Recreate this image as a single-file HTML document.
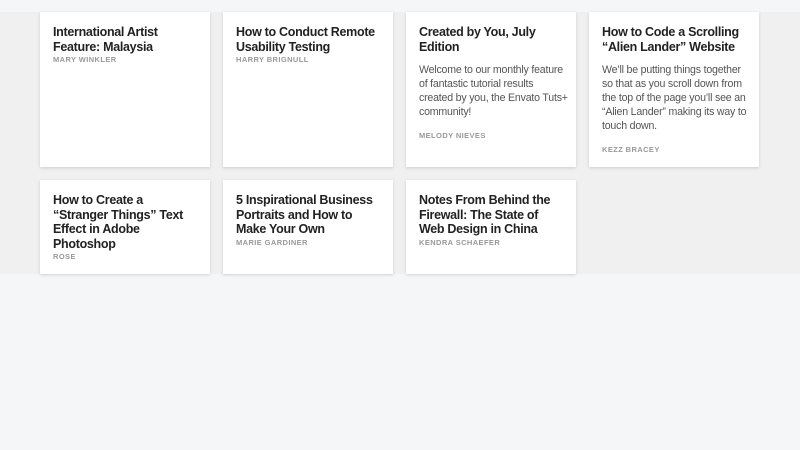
<!DOCTYPE html><html><head><style>
html,body{margin:0;width:800px;height:450px;background:#f5f6f8;font-family:"Liberation Sans",Arial,sans-serif;overflow:hidden}
.band{position:absolute;top:12px;left:0;width:800px;height:262px;background:#f0f0f0}
.c{position:absolute;width:170px;background:#fff;box-shadow:0 1px 3px rgba(0,0,0,.15);box-sizing:border-box;padding:13px 5px 0 13px;white-space:nowrap;overflow:hidden}
.t{font-weight:bold;font-size:12.5px;line-height:14.5px;color:#222;letter-spacing:-0.3px}
.a{font-size:7.5px;font-weight:bold;letter-spacing:.4px;color:#999;text-transform:uppercase;margin-top:1px}
.b{font-size:10.6px;line-height:14px;color:#555;margin:9px 0 12px;letter-spacing:-0.2px}
</style></head><body>
<div class="band"></div>
<div class="c" style="left:40px;top:12px;height:155px"><div class="t">International Artist<br>Feature: Malaysia</div><div class="a">Mary Winkler</div></div>
<div class="c" style="left:223px;top:12px;height:155px"><div class="t">How to Conduct Remote<br>Usability Testing</div><div class="a">Harry Brignull</div></div>
<div class="c" style="left:406px;top:12px;height:155px"><div class="t">Created by You, July<br>Edition</div><div class="b">Welcome to our monthly feature<br>of fantastic tutorial results<br>created by you, the Envato Tuts+<br>community!</div><div class="a">Melody Nieves</div></div>
<div class="c" style="left:589px;top:12px;height:155px"><div class="t">How to Code a Scrolling<br>“Alien Lander” Website</div><div class="b">We’ll be putting things together<br>so that as you scroll down from<br>the top of the page you’ll see an<br>“Alien Lander” making its way to<br>touch down.</div><div class="a">Kezz Bracey</div></div>
<div class="c" style="left:40px;top:180px;height:94px"><div class="t">How to Create a<br>“Stranger Things” Text<br>Effect in Adobe<br>Photoshop</div><div class="a">Rose</div></div>
<div class="c" style="left:223px;top:180px;height:94px"><div class="t">5 Inspirational Business<br>Portraits and How to<br>Make Your Own</div><div class="a">Marie Gardiner</div></div>
<div class="c" style="left:406px;top:180px;height:94px"><div class="t">Notes From Behind the<br>Firewall: The State of<br>Web Design in China</div><div class="a">Kendra Schaefer</div></div>
</body></html>
